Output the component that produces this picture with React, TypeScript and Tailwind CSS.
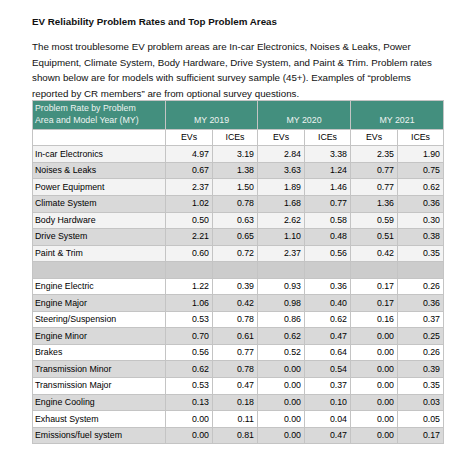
import React from "react";

type Row = { label: string; v: string[]; bg: string };

const LIGHT = "bg-[#f3f3f3]";
const GRAY = "bg-[#d9d9d9]";
const WHITE = "bg-white";

const section1: [string, string[]][] = [
  ["In-car Electronics", ["4.97", "3.19", "2.84", "3.38", "2.35", "1.90"]],
  ["Noises & Leaks", ["0.67", "1.38", "3.63", "1.24", "0.77", "0.75"]],
  ["Power Equipment", ["2.37", "1.50", "1.89", "1.46", "0.77", "0.62"]],
  ["Climate System", ["1.02", "0.78", "1.68", "0.77", "1.36", "0.36"]],
  ["Body Hardware", ["0.50", "0.63", "2.62", "0.58", "0.59", "0.30"]],
  ["Drive System", ["2.21", "0.65", "1.10", "0.48", "0.51", "0.38"]],
  ["Paint & Trim", ["0.60", "0.72", "2.37", "0.56", "0.42", "0.35"]],
];

const section2: [string, string[]][] = [
  ["Engine Electric", ["1.22", "0.39", "0.93", "0.36", "0.17", "0.26"]],
  ["Engine Major", ["1.06", "0.42", "0.98", "0.40", "0.17", "0.36"]],
  ["Steering/Suspension", ["0.53", "0.78", "0.86", "0.62", "0.16", "0.37"]],
  ["Engine Minor", ["0.70", "0.61", "0.62", "0.47", "0.00", "0.25"]],
  ["Brakes", ["0.56", "0.77", "0.52", "0.64", "0.00", "0.26"]],
  ["Transmission Minor", ["0.62", "0.78", "0.00", "0.54", "0.00", "0.39"]],
  ["Transmission Major", ["0.53", "0.47", "0.00", "0.37", "0.00", "0.35"]],
  ["Engine Cooling", ["0.13", "0.18", "0.00", "0.10", "0.00", "0.03"]],
  ["Exhaust System", ["0.00", "0.11", "0.00", "0.04", "0.00", "0.05"]],
  ["Emissions/fuel system", ["0.00", "0.81", "0.00", "0.47", "0.00", "0.17"]],
];

const rows1: Row[] = section1.map(([label, v], i) => ({ label, v, bg: i % 2 === 0 ? LIGHT : GRAY }));
const rows2: Row[] = section2.map(([label, v], i) => ({ label, v, bg: i % 2 === 0 ? WHITE : GRAY }));

const cellB = "border border-[#c4c4c4] p-0";

function DataRow({ r }: { r: Row }) {
  return (
    <tr className={`${r.bg} h-[16.55px]`}>
      <td className={`${cellB} pl-[2px] text-left leading-none`}>{r.label}</td>
      {r.v.map((x, i) => (
        <td key={i} className={`${cellB} pr-[3px] text-right leading-none`}>
          {x}
        </td>
      ))}
    </tr>
  );
}

export default function App() {
  return (
    <div
      className="w-[474px] h-[460px] bg-white text-[#111] overflow-hidden"
      style={{ fontFamily: '"Liberation Sans", Arial, sans-serif' }}
    >
      <div className="pl-[32px] pt-[16px]">
        <h1 className="text-[9.8px] font-bold leading-[12px]">EV Reliability Problem Rates and Top Problem Areas</h1>
        <p className="mt-[11px] text-[9.75px] leading-[15.6px] whitespace-nowrap">
          The most troublesome EV problem areas are In-car Electronics, Noises &amp; Leaks, Power
          <br />
          Equipment, Climate System, Body Hardware, Drive System, and Paint &amp; Trim. Problem rates
          <br />
          shown below are for models with sufficient survey sample (45+). Examples of “problems
          <br />
          reported by CR members” are from optional survey questions.
        </p>
        <table className="mt-[-1px] border-collapse table-fixed text-[8.8px] text-black w-[411px]">
          <colgroup>
            <col className="w-[133px]" />
            <col className="w-[47px]" />
            <col className="w-[45px]" />
            <col className="w-[47px]" />
            <col className="w-[46px]" />
            <col className="w-[47px]" />
            <col className="w-[46px]" />
          </colgroup>
          <tbody>
            <tr className="h-[29px] bg-[#438f7e] text-[#eef3f1]">
              <td className={`${cellB} pl-[2px] align-bottom pb-[3px] leading-[12px]`}>
                Problem Rate by Problem
                <br />
                Area and Model Year (MY)
              </td>
              <td colSpan={2} className={`${cellB} text-center align-bottom pb-[3px] leading-[12px]`}>
                MY 2019
              </td>
              <td colSpan={2} className={`${cellB} text-center align-bottom pb-[3px] leading-[12px]`}>
                MY 2020
              </td>
              <td colSpan={2} className={`${cellB} text-center align-bottom pb-[3px] leading-[12px]`}>
                MY 2021
              </td>
            </tr>
            <tr className="h-[16px] bg-white">
              <td className={cellB}></td>
              {["EVs", "ICEs", "EVs", "ICEs", "EVs", "ICEs"].map((h, i) => (
                <td key={i} className={`${cellB} text-center leading-none`}>
                  {h}
                </td>
              ))}
            </tr>
            {rows1.map((r) => (
              <DataRow key={r.label} r={r} />
            ))}
            <tr className="h-[16.55px] bg-[#cccccc]">
              {Array.from({ length: 7 }).map((_, i) => (
                <td key={i} className={cellB}></td>
              ))}
            </tr>
            {rows2.map((r) => (
              <DataRow key={r.label} r={r} />
            ))}
          </tbody>
        </table>
      </div>
    </div>
  );
}
